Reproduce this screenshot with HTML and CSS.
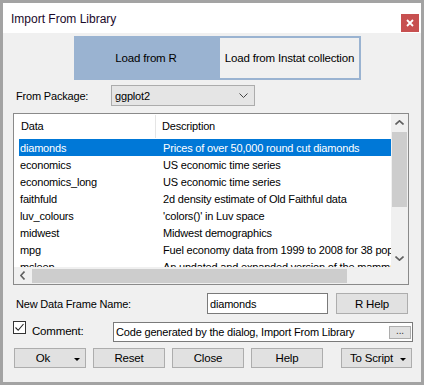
FILE: index.html
```html
<!DOCTYPE html>
<html>
<head>
<meta charset="utf-8">
<link rel="stylesheet" href="styles.css">
</head>
<body>
<div class="window">
  <div class="titlebar">
    <span class="title">Import From Library</span>
    <div class="close"><svg width="8" height="8" viewBox="0 0 8 8"><path d="M1 1 L7 7 M7 1 L1 7" stroke="#fff" stroke-width="1.8"/></svg></div>
  </div>
  <div class="content">
    <div class="tabs">
      <div class="tab active">Load from R</div>
      <div class="tab other">Load from Instat collection</div>
    </div>
    <div class="row pkg">
      <span class="lbl pkg-lbl">From Package:</span>
      <div class="select"><span>ggplot2</span><svg class="chev" width="9" height="5" viewBox="0 0 9 5"><path d="M0.5 0.5 L4.5 4.5 L8.5 0.5" fill="none" stroke="#444" stroke-width="1"/></svg></div>
    </div>
    <div class="listbox">
      <div class="lv-main">
        <div class="lv-view">
          <div class="lv-header"><div class="hc c1">Data</div><div class="hc c2">Description</div></div>
          <div class="lv-rows">
            <div class="lv-row sel"><div class="c1">diamonds</div><div class="c2">Prices of over 50,000 round cut diamonds</div></div>
            <div class="lv-row"><div class="c1">economics</div><div class="c2">US economic time series</div></div>
            <div class="lv-row"><div class="c1">economics_long</div><div class="c2">US economic time series</div></div>
            <div class="lv-row"><div class="c1">faithfuld</div><div class="c2">2d density estimate of Old Faithful data</div></div>
            <div class="lv-row"><div class="c1">luv_colours</div><div class="c2">'colors()' in Luv space</div></div>
            <div class="lv-row"><div class="c1">midwest</div><div class="c2">Midwest demographics</div></div>
            <div class="lv-row"><div class="c1">mpg</div><div class="c2">Fuel economy data from 1999 to 2008 for 38 popular models of cars</div></div>
            <div class="lv-row"><div class="c1">msleep</div><div class="c2">An updated and expanded version of the mammals sleep dataset</div></div>
          </div>
        </div>
        <div class="vscroll">
          <div class="sarrow"><svg width="9" height="5" viewBox="0 0 9 5"><path d="M0.5 4.5 L4.5 0.8 L8.5 4.5" fill="none" stroke="#606060" stroke-width="1.6"/></svg></div>
          <div class="vtrack"><div class="vthumb"></div></div>
          <div class="sarrow"><svg width="9" height="5" viewBox="0 0 9 5"><path d="M0.5 0.5 L4.5 4.2 L8.5 0.5" fill="none" stroke="#606060" stroke-width="1.6"/></svg></div>
        </div>
      </div>
      <div class="hscroll-row">
        <div class="hscroll">
          <div class="harrow"><svg width="5" height="9" viewBox="0 0 5 9"><path d="M4.5 0.5 L0.8 4.5 L4.5 8.5" fill="none" stroke="#606060" stroke-width="1.6"/></svg></div>
          <div class="hthumb"></div>
        </div>
        <div class="corner"></div>
      </div>
    </div>
    <div class="row name-row">
      <span class="lbl name-lbl">New Data Frame Name:</span>
      <div class="textbox name-box">diamonds</div>
      <div class="btn rhelp">R Help</div>
    </div>
    <div class="row comment-row">
      <div class="check"><svg width="11" height="11" viewBox="0 0 11 11"><path d="M1.5 5.5 L4.2 8.3 L9.5 2" fill="none" stroke="#222" stroke-width="1.1"/></svg></div>
      <span class="lbl comment-lbl">Comment:</span>
      <div class="textbox comment-box"><span>Code generated by the dialog, Import From Library</span><div class="dots">...</div></div>
    </div>
    <div class="row btn-row">
      <div class="btn split"><span>Ok</span><span class="tri"></span></div>
      <div class="btn">Reset</div>
      <div class="btn">Close</div>
      <div class="btn">Help</div>
      <div class="btn split script"><span>To Script</span><span class="tri"></span></div>
    </div>
  </div>
</div>
</body>
</html>
```
FILE: styles.css
```css
* { box-sizing: border-box; }
html, body { margin: 0; padding: 0; }
body {
  font-family: "Liberation Sans", Arial, sans-serif;
  font-size: 11px;
  letter-spacing: -0.18px;
  color: #000;
  background: #a3a3a3;
}
.window {
  width: 424px;
  height: 385px;
  border: 3px solid #a3a3a3;
  display: flex;
  flex-direction: column;
  background: #f0f0f0;
}
.titlebar {
  height: 30px;
  background: #fff;
  display: flex;
  align-items: center;
  justify-content: space-between;
  padding-left: 8px;
  padding-right: 2px;
}
.title { font-size: 12px; letter-spacing: 0; color: #1a0a2a; padding-top: 2px; }
.close {
  width: 18px; height: 18px;
  background: #c75050;
  display: flex; align-items: center; justify-content: center;
  margin-top: 10px;
}
.content { flex: 1; background: #f0f0f0; }
.tabs {
  display: flex;
  margin: 3px 0 0 71px;
  width: 287px;
  height: 44px;
}
.tab {
  display: flex; align-items: center; justify-content: center;
  font-size: 11.5px;
  white-space: nowrap;
}
.tab.active { width: 144px; background: #9ab3d1; padding-bottom: 1px; }
.tab.other { width: 143px; border: 2px solid #9ab3d1; background: #f0f0f0; }
.row { display: flex; align-items: center; }
.lbl { white-space: nowrap; }
.pkg { margin-top: 5px; height: 21px; padding-left: 13px; }
.pkg-lbl { width: 95px; }
.select {
  width: 144px; height: 21px;
  border: 1px solid #acacac;
  background: #e5e5e5;
  display: flex; align-items: center; justify-content: space-between;
  padding: 0 6px 0 3px;
}
.listbox {
  margin: 7px 0 0 10px;
  width: 396px; height: 172px;
  border: 1px solid #8a8a8a;
  background: #fff;
  display: flex; flex-direction: column;
}
.lv-main { display: flex; height: 153px; }
.lv-view { width: 377px; overflow: hidden; }
.lv-header { display: flex; height: 25px; }
.hc { display: flex; align-items: center; padding-bottom: 2px; }
.lv-header .c1 { width: 142px; padding-left: 7px; border-right: 1px solid #e5e5e5; height: 23px; margin-top: 1px; }
.lv-header .c2 { padding-left: 6px; }
.lv-rows { margin-left: 5px; }
.lv-row { display: flex; height: 17px; align-items: center; width: 560px; white-space: nowrap; }
.lv-row .c1 { width: 137px; padding-left: 1px; }
.lv-row .c2 { padding-left: 7px; }
.lv-row.sel { background: #0078d7; color: #fff; }
.vscroll { width: 17px; background: #f0f0f0; display: flex; flex-direction: column; }
.sarrow { height: 17px; display: flex; align-items: center; justify-content: center; }
.vtrack { flex: 1; padding: 1px 1px; }
.vthumb { height: 75px; background: #cdcdcd; }
.hscroll-row { display: flex; height: 17px; }
.hscroll { width: 377px; background: #f0f0f0; display: flex; align-items: center; }
.harrow { width: 17px; height: 17px; display: flex; align-items: center; justify-content: center; }
.hthumb { width: 315px; height: 14px; background: #cdcdcd; margin-left: 1px; }
.corner { width: 17px; background: #f0f0f0; }
.name-row { margin-top: 8px; height: 21px; padding-left: 13px; }
.name-lbl { width: 191px; }
.textbox {
  background: #fff; border: 1px solid #7a7a7a;
  display: flex; align-items: center;
}
.name-box { width: 121px; height: 21px; padding-left: 2px; }
.btn {
  width: 72px; height: 21px;
  background: #e1e1e1; border: 1px solid #adadad;
  display: flex; align-items: center; justify-content: center;
  font-size: 11.5px;
}
.rhelp { margin-left: 8px; }
.comment-row { margin-top: 7px; height: 21px; padding-left: 10px; align-items: flex-start; }
.check {
  width: 13px; height: 13px;
  border: 1px solid #333; background: #fff;
  display: flex; align-items: center; justify-content: center;
}
.comment-lbl { width: 87px; padding-left: 6px; margin-top: 4px; font-size: 11.5px; }
.comment-box { width: 300px; height: 20px; margin-top: 1px; justify-content: space-between; padding-left: 2px; padding-right: 1px; }
.dots {
  width: 22px; height: 13px; background: #e1e1e1; border: 1px solid #adadad;
  font-size: 10px; display: flex; justify-content: center; align-items: flex-start; line-height: 8px; color: #333;
}
.btn-row { margin-top: 6px; padding-left: 11px; gap: 7px; }
.btn-row .btn { height: 20px; }
.split { position: relative; }
.tri {
  position: absolute; right: 5px; top: 9px;
  width: 0; height: 0;
  border-left: 3px solid transparent; border-right: 3px solid transparent;
  border-top: 3px solid #000;
}
.split span:first-child { margin-right: 14px; }
.script { margin-left: 11px; width: 71px; }
.script span:first-child { margin-right: 10px; }
```
